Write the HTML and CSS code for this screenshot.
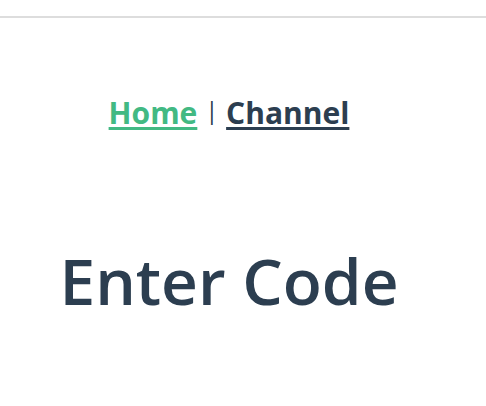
FILE: index.html
```html
<!DOCTYPE html>
<html>
<head>
<meta charset="utf-8">
<link rel="stylesheet" href="styles.css">
</head>
<body>
<div class="app">
  <div class="topbar"></div>
  <div class="page">
    <nav class="nav">
      <a class="link active" href="#">Home</a> <span class="sep">|</span> <a class="link" href="#">Channel</a>
    </nav>
    <h1 class="title">Enter Code</h1>
  </div>
</div>
</body>
</html>
```
FILE: styles.css
```css
html, body {
  margin: 0;
  padding: 0;
  background: #ffffff;
}
.app {
  font-family: "Open Sans", "Liberation Sans", sans-serif;
  color: #2c3e50;
  width: 486px;
}
.topbar {
  height: 16px;
  border-bottom: 2px solid #dddddd;
}
.page {
  width: 458px;
  text-align: center;
}
.nav {
  padding-top: 75px;
  font-size: 30px;
  line-height: 40px;
}
.link {
  font-weight: 700;
  color: #2c3e50;
  text-decoration: underline;
  text-decoration-thickness: 3px;
  text-underline-offset: 3px;
}
.link.active {
  color: #42b983;
}
.sep {
  font-weight: 500;
  font-size: 24px;
  line-height: 1;
  vertical-align: 5px;
}
.title {
  margin: 108px 0 0;
  font-size: 64px;
  line-height: 80px;
  font-weight: 600;
}
```
